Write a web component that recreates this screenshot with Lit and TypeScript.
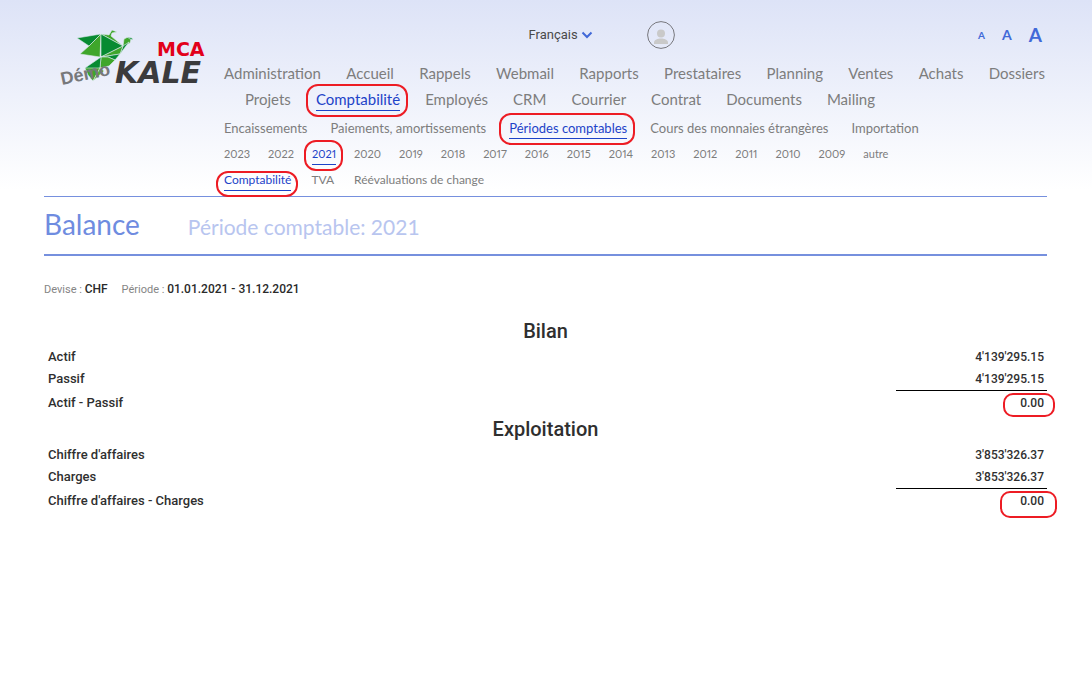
import { LitElement, html, css, svg } from "lit";
import { customElement, property } from "lit/decorators.js";

interface NavRow {
  kind: string;
  label: string;
  items: string[];
  active?: string;
}

const ROWS: NavRow[] = [
  {
    kind: "main",
    label: "Navigation principale",
    items: ["Administration", "Accueil", "Rappels", "Webmail", "Rapports", "Prestataires", "Planning", "Ventes", "Achats", "Dossiers"],
  },
  {
    kind: "more",
    label: "Navigation principale, suite",
    items: ["Projets", "Comptabilité", "Employés", "CRM", "Courrier", "Contrat", "Documents", "Mailing"],
    active: "Comptabilité",
  },
  {
    kind: "section",
    label: "Comptabilité",
    items: ["Encaissements", "Paiements, amortissements", "Périodes comptables", "Cours des monnaies étrangères", "Importation"],
    active: "Périodes comptables",
  },
  {
    kind: "years",
    label: "Années",
    items: ["2023", "2022", "2021", "2020", "2019", "2018", "2017", "2016", "2015", "2014", "2013", "2012", "2011", "2010", "2009", "autre"],
    active: "2021",
  },
  {
    kind: "views",
    label: "Vues",
    items: ["Comptabilité", "TVA", "Réévaluations de change"],
    active: "Comptabilité",
  },
];

@customElement("kale-logo")
export class KaleLogo extends LitElement {
  static styles = css`
    :host { display: block; }
    svg { display: block; }
    .demo { font: bold 18px "Liberation Sans", sans-serif; fill: #77787b; }
    .kale { font: italic bold 30px "DejaVu Sans", sans-serif; fill: #3b3b3d; }
    .mca { font: bold 19px "DejaVu Sans", sans-serif; fill: #e2001a; }
  `;

  render() {
    return html`<svg width="168" height="60" viewBox="0 0 168 60" role="img" aria-label="MCA KALE">
      ${svg`
        <g stroke="#dfe9f0" stroke-width="0.6" stroke-linejoin="round">
          <path d="M33 8 57 4 45 16Z" fill="#078b32"/>
          <path d="M57 4 45 16 36 24 56 27Z" fill="#3fa62b"/>
          <path d="M57 4 65 5 68 0 73 2 68 3 67 6 79 16Z" fill="#3fa62b"/>
          <path d="M57 4 79 16 57 27Z" fill="#078b32"/>
          <path d="M79 16 80 9 84 7 87 9 86 13Z" fill="#3fa62b"/>
          <path d="M83 7 88 8 89 10 86 9Z" fill="#078b32"/>
          <path d="M79 16 85 12 76 24Z" fill="#078b32"/>
          <path d="M57 27 79 16 76 24Z" fill="#3fa62b"/>
          <path d="M57 27 76 24 71 30 64 27Z" fill="#078b32"/>
          <path d="M57 27 64 27 71 30 65 36 56 38Z" fill="#3fa62b"/>
          <path d="M57 27 41 38 44 41 56 38Z" fill="#078b32"/>
          <path d="M41 38 44 45 49 51 56 38Z" fill="#3fa62b"/>
          <path d="M49 51 56 38 60 41Z" fill="#52b32e"/>
        </g>
        <text class="demo" transform="translate(18 55) rotate(-12)">Démo</text>
        <text class="kale" x="71" y="53">KALE</text>
        <text class="mca" x="113" y="26">MCA</text>
      `}
    </svg>`;
  }
}

@customElement("nav-row")
export class NavRowElement extends LitElement {
  @property({ attribute: false }) row!: NavRow;

  static styles = css`
    :host { display: block; font-family: Lato, sans-serif; }
    .list { display: flex; flex-wrap: wrap; margin: 0; padding: 0; list-style: none; column-gap: 20px; }
    .link {
      display: block; position: relative; color: #7d7d7d; text-decoration: none; white-space: nowrap;
      font-size: 13px; line-height: 20px; border-bottom: 1px solid transparent;
    }
    .main .link, .more .link { font-size: 15px; line-height: 21px; }
    .main { justify-content: space-between; padding-right: 2px; }
    .more { padding-left: 21px; column-gap: 25px; }
    .section { column-gap: 23px; }
    .years { column-gap: 18px; font-variant-numeric: proportional-nums lining-nums; }
    .views .link { font-size: 12px; }
    .years .link { font-size: 11px; }
    .link.active { color: #1d43c8; border-bottom-color: #1d43c8; }
    .link.active::after {
      content: ""; position: absolute; inset: -5px -8px -7px -10px;
      border: 2px solid #ed1c24; border-radius: 12px; pointer-events: none;
    }
    .years .link.active::after { inset: -4px -7px -7px -8px; }
    .views .link.active::after { inset: 1px -7px -7px -8px; }
  `;

  render() {
    const { kind, label, items, active } = this.row;
    return html`<nav aria-label=${label}>
      <ul class="list ${kind}">
        ${items.map((item) => html`<li><a class="link ${item === active ? "active" : ""}" href="#">${item}</a></li>`)}
      </ul>
    </nav>`;
  }
}

@customElement("balance-table")
export class BalanceTable extends LitElement {
  @property() heading = "";
  @property({ attribute: false }) rows: string[][] = [];
  @property({ type: Boolean, reflect: true }) wide = false;

  static styles = css`
    :host { display: block; }
    table { width: 100%; border-collapse: separate; border-spacing: 0; font-size: 13px; line-height: 18px; color: #2f2f2f; }
    caption { font-size: 20px; line-height: 30px; font-weight: 500; }
    th, td { padding: 2px 3px; font-weight: 500; }
    th { text-align: left; padding-left: 4px; }
    td { text-align: right; width: 145px; font-size: 12px; }
    .total td { border-top: 1px solid #000; }
    .total th { padding-top: 4px; }
    .value { position: relative; }
    .value::after {
      content: ""; position: absolute; inset: -3px -11px -7px -17px;
      border: 2px solid #ed1c24; border-radius: 10px; pointer-events: none;
    }
    :host([wide]) .value::after { inset: -3px -13px -10px -20px; }
  `;

  render() {
    return html`<table>
      <caption>${this.heading}</caption>
      <tbody>
        ${this.rows.map(([name, amount], i) => {
          const total = i === this.rows.length - 1;
          return html`<tr class=${total ? "total" : ""}>
            <th scope="row">${name}</th>
            <td>${total ? html`<span class="value">${amount}</span>` : amount}</td>
          </tr>`;
        })}
      </tbody>
    </table>`;
  }
}

@customElement("app-root")
export class AppRoot extends LitElement {
  static styles = css`
    :host { display: block; min-height: 100vh; background: #fff; font-family: Roboto, sans-serif; color: #2f2f2f; }
    .page { padding: 0 45px 0 44px; background: linear-gradient(#dde3f7, #fff 190px); }
    .header { display: grid; grid-template-columns: 180px minmax(0, 1fr); padding-bottom: 5px; border-bottom: 1px solid #7690de; }
    .logo { padding-top: 30px; }
    .tools { display: flex; align-items: center; height: 28px; margin: 21px 0 14px; padding-left: 37%; }
    .language { display: flex; align-items: center; width: 118px; gap: 2px; }
    .select {
      appearance: none; border: 0; background: none; padding: 0; width: 50px; margin: 0;
      font: 13px/20px Roboto, sans-serif; color: #4a4a4a;
    }
    .button { border: 0; background: none; padding: 0; line-height: 28px; color: #4169d8; font-family: Lato, sans-serif; font-weight: 700; }
    .user { display: block; }
    .user svg, .language svg { display: block; }
    .sizes { display: flex; align-items: center; gap: 17px; margin-left: auto; padding-right: 5px; }
    .small { font-size: 10px; }
    .medium { font-size: 14px; }
    .large { font-size: 19px; }
    .menus { display: flex; flex-direction: column; gap: 5px; }
    .primary { display: flex; flex-direction: column; gap: 4px; padding-bottom: 2px; }
    .title { display: flex; align-items: baseline; gap: 48px; padding: 10px 0; border-bottom: 2px solid #7690de; font-family: Lato, sans-serif; }
    .heading { margin: 0; font-size: 28px; line-height: 35px; font-weight: 400; color: #6f8ce0; }
    .subtitle { margin: 0; font-size: 21px; line-height: 35px; color: #b8c5ef; }
    .details { display: flex; gap: 14px; margin: 23px 0 16px; font-size: 11px; line-height: 20px; color: #858585; }
    .details p { margin: 0; }
    .details strong { font-size: 12px; font-weight: 500; color: #2a2a2a; }
  `;

  render() {
    return html`<div class="page">
      <header class="header">
        <kale-logo class="logo"></kale-logo>
        <div>
          <div class="tools">
            <div class="language">
              <select class="select" aria-label="Langue"><option>Français</option></select>
              <svg width="12" height="8" viewBox="0 0 12 8" fill="none" stroke="#4169d8" stroke-width="2" aria-hidden="true"><path d="m1.500 1.500 4.500 4.500 4.500-4.500"/></svg>
            </div>
            <button class="button user" aria-label="Compte">
              <svg width="28" height="28" viewBox="0 0 28 28"><circle cx="14" cy="14" r="13.400" fill="none" stroke="#77777d"/><g fill="#c9c9c9"><circle cx="14" cy="12.500" r="4"/><path d="M7 23v-1.500c0-2.700 4-4 7-4s7 1.300 7 4V23z"/></g></svg>
            </button>
            <div class="sizes">
              <button class="button small" aria-label="Petit texte">A</button>
              <button class="button medium" aria-label="Texte moyen">A</button>
              <button class="button large" aria-label="Grand texte">A</button>
            </div>
          </div>
          <div class="menus">
            <div class="primary">${ROWS.slice(0, 2).map((row) => html`<nav-row .row=${row}></nav-row>`)}</div>
            ${ROWS.slice(2).map((row) => html`<nav-row .row=${row}></nav-row>`)}
          </div>
        </div>
      </header>
      <main>
        <div class="title">
          <h1 class="heading">Balance</h1>
          <p class="subtitle">Période comptable: 2021</p>
        </div>
        <div class="details">
          <p>Devise : <strong>CHF</strong></p>
          <p>Période : <strong>01.01.2021 - 31.12.2021</strong></p>
        </div>
        <balance-table heading="Bilan" .rows=${[["Actif", "4'139'295.15"], ["Passif", "4'139'295.15"], ["Actif - Passif", "0.00"]]}></balance-table>
        <balance-table wide heading="Exploitation" .rows=${[["Chiffre d'affaires", "3'853'326.37"], ["Charges", "3'853'326.37"], ["Chiffre d'affaires - Charges", "0.00"]]}></balance-table>
      </main>
    </div>`;
  }
}
